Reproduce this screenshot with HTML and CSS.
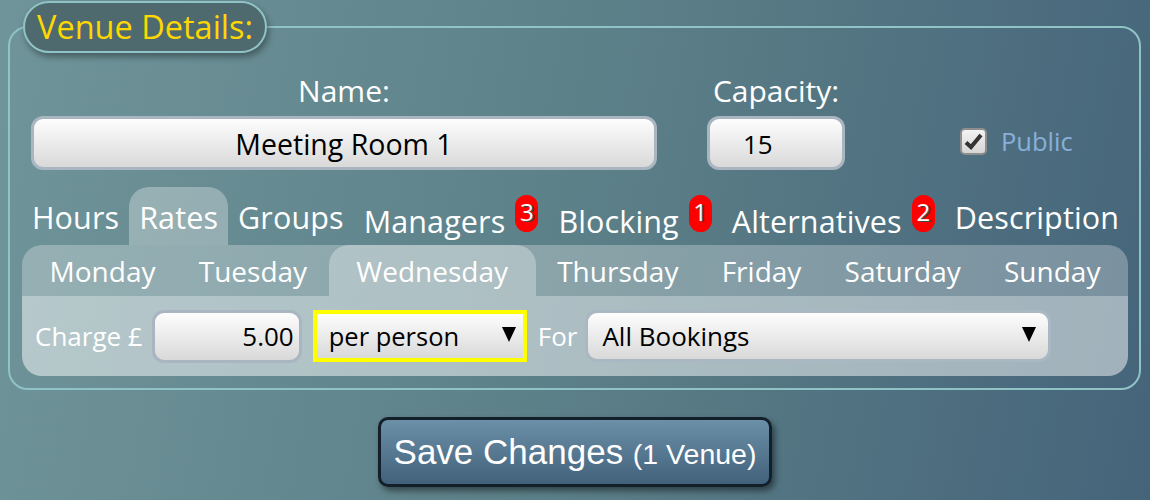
FILE: index.html
```html
<!DOCTYPE html>
<html>
<head>
    <meta charset="UTF-8">
    <title>Venue Details</title>
    <link rel="stylesheet" href="styles.css">
</head>
<body>
    <div class="page">
        <fieldset class="venue">
            <legend>Venue Details:</legend>

            <div class="fields">
                <label class="field">
                    <span class="caption">Name:</span>
                    <input class="text centre" type="text" value="Meeting Room 1">
                </label>
                <label class="field">
                    <span class="caption">Capacity:</span>
                    <input class="text capacity" type="text" value="15">
                </label>
                <label class="public">
                    <span class="check">
                        <svg width="19" height="17" viewBox="0 0 19 17"><path d="M2 9.5 L7 14 L17 2" fill="none" stroke="#333" stroke-width="4" stroke-linejoin="miter"/></svg>
                    </span>
                    Public
                </label>
            </div>

            <ul class="tabs">
                <li>Hours</li>
                <li class="active">Rates</li>
                <li>Groups</li>
                <li class="counted">Managers <span class="badge">3</span></li>
                <li class="counted">Blocking <span class="badge">1</span></li>
                <li class="counted">Alternatives <span class="badge">2</span></li>
                <li>Description</li>
            </ul>

            <div class="panel">
                <ul class="days">
                    <li>Monday</li>
                    <li>Tuesday</li>
                    <li class="active">Wednesday</li>
                    <li>Thursday</li>
                    <li>Friday</li>
                    <li>Saturday</li>
                    <li>Sunday</li>
                </ul>
                <div class="rate">
                    <span class="caption">Charge £</span>
                    <input class="text charge" type="text" value="5.00">
                    <div class="select focused"><span>per person</span><i class="arrow"></i></div>
                    <span class="caption">For</span>
                    <div class="select bookings"><span>All Bookings</span><i class="arrow"></i></div>
                </div>
            </div>
        </fieldset>

        <div class="actions">
            <button class="save">Save Changes <small>(1 Venue)</small></button>
        </div>
    </div>
</body>
</html>
```

FILE: styles.css
```css
*{
    padding: 0;
    margin: 0;
    box-sizing: border-box;
}
html, body{
    height: 100%;
}
body{
    font-family: "Open Sans", "Noto Sans", sans-serif;
    color: #fff;
    background: linear-gradient(100deg, #6f9499 0%, #5c8088 50%, #45647a 100%);
    overflow: hidden;
}
.page{
    padding-top: 1px;
}

/* outer frame with the pill legend */
.venue{
    margin: 0 9px 0 8px;
    padding: 0 11px 12px 12px;
    border: 2px solid #8fc3c6;
    border-radius: 20px;
    min-width: 0;
}
.venue legend{
    margin-left: 1px;
    padding: 0 12px;
    height: 52px;
    line-height: 48px;
    font-size: 32.5px;
    color: #ffd700;
    background: #4f6a6e;
    border: 2px solid #8fc3c6;
    border-radius: 26px;
    box-shadow: 2px 4px 6px rgba(0,0,0,.35);
}

/* name / capacity / public */
.fields{
    display: grid;
    grid-template-columns: 626px 138px auto;
    column-gap: 50px;
    align-items: end;
    margin-top: 20px;
    padding-left: 9px;
}
.field{
    display: flex;
    flex-direction: column;
    align-items: center;
    gap: 7px;
}
.field .caption{
    font-size: 30px;
    line-height: 36px;
}
.text{
    display: block;
    width: 100%;
    height: 54px;
    padding: 2px 12px 0;
    font-family: inherit;
    font-size: 28.5px;
    color: #000;
    background: linear-gradient(#fdfdfd, #d9d9d9);
    border: 3px solid #a9b5c0;
    border-radius: 12px;
    outline: none;
}
.centre{
    text-align: center;
}
.capacity{
    font-size: 26px;
    padding-left: 33px;
}
.public{
    display: flex;
    align-items: center;
    gap: 14px;
    margin: 0 0 12px 65px;
    font-size: 25.5px;
    color: #88b0d8;
}
.check{
    display: flex;
    align-items: center;
    justify-content: center;
    width: 27px;
    height: 27px;
    background: linear-gradient(#f3f3f3, #d6d6d6);
    border: 2px solid #8e8e8e;
    border-radius: 5px;
}

/* top tabs */
.tabs{
    display: flex;
    align-items: flex-end;
    list-style: none;
    margin-top: 17px;
}
.tabs li{
    display: flex;
    align-items: flex-start;
    height: 58px;
    padding: 10px 10px 0;
    font-size: 30.5px;
    letter-spacing: .12px;
    line-height: 40px;
    white-space: pre;
}
.tabs .active{
    background: rgba(255,255,255,.3);
    border-radius: 20px 20px 0 0;
}
.tabs .counted{
    padding-top: 14px;
}
.badge{
    display: block;
    width: 23px;
    height: 37px;
    margin: -6px 0 0 2px;
    font-size: 24px;
    line-height: 33px;
    text-align: center;
    background: #f00;
    border-radius: 12px;
    text-shadow: 2px 1px 0 #444;
}

/* day panel */
.panel{
    background: rgba(255,255,255,.28);
    border-radius: 20px;
    overflow: hidden;
}
.days{
    display: flex;
    list-style: none;
    height: 51px;
    padding: 0 6px;
}
.days li{
    flex: auto;
    text-align: center;
    font-size: 28px;
    line-height: 52px;
}
.days .active{
    padding: 0 6px;
    background: rgba(255,255,255,.3);
    border-radius: 20px 20px 0 0;
}
.rate{
    display: flex;
    align-items: center;
    height: 80px;
    padding-left: 13px;
    background: rgba(255,255,255,.3);
}
.rate .caption{
    font-size: 26px;
}
.charge{
    width: 150px;
    height: 53px;
    margin: 0 11px 0 9px;
    font-size: 26px;
    text-align: right;
    padding: 0 5px 0 0;
}
.select{
    display: flex;
    align-items: center;
    justify-content: space-between;
    height: 52px;
    font-size: 25.5px;
    color: #000;
    background: linear-gradient(#fdfdfd, #d9d9d9);
}
.focused{
    width: 214px;
    margin-right: 11px;
    padding: 0 7px 0 12px;
    border: 4px solid #ffff00;
}
.bookings{
    width: 466px;
    margin-left: 8px;
    padding: 0 12px 0 14px;
    font-size: 26px;
    border: 3px solid #a9b8c3;
    border-radius: 12px;
}
.arrow{
    width: 0;
    height: 0;
    border-left: 7.5px solid transparent;
    border-right: 7.5px solid transparent;
    border-top: 15px solid #000;
    margin-bottom: 4px;
}

/* save button */
.actions{
    display: flex;
    justify-content: center;
    margin-top: 27px;
}
.save{
    width: 394px;
    height: 70px;
    font-family: "Liberation Sans", Arial, sans-serif;
    font-size: 35px;
    color: #fff;
    background: linear-gradient(#6b90a8, #42617a);
    border: 3px solid #13202a;
    border-radius: 10px;
    box-shadow: 3px 4px 6px rgba(0,0,0,.45);
}
.save small{
    font-size: 28.5px;
}
```
